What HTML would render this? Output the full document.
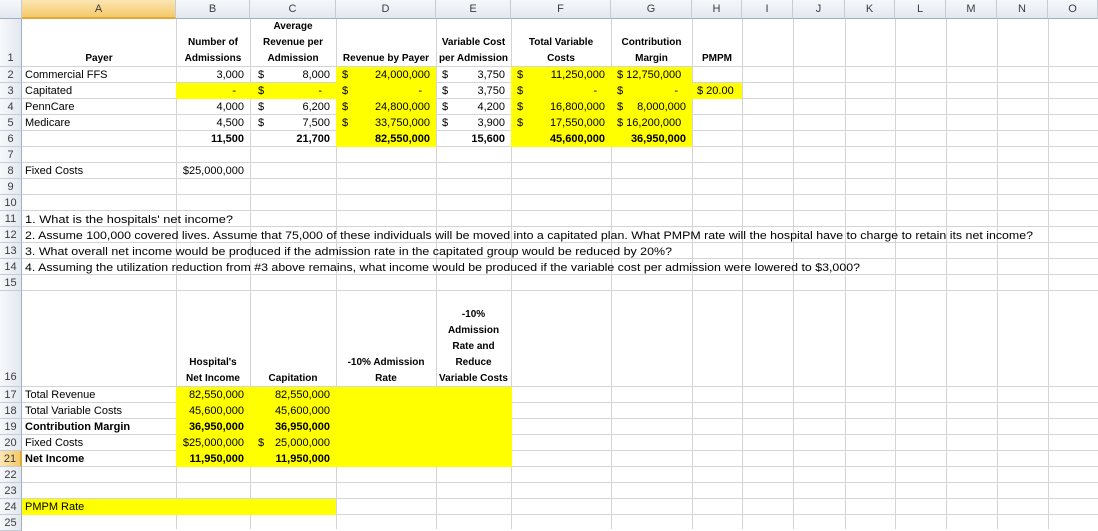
<!DOCTYPE html>
<html><head><meta charset="utf-8"><style>
*{margin:0;padding:0;box-sizing:border-box}
body{width:1098px;height:529px;overflow:hidden;background:#fff;position:relative;font-family:"Liberation Sans",sans-serif;font-size:11px}
div{position:absolute}
.v{top:19px;width:1px;height:510px;background:#d4d4d4}
.h{left:22px;width:1076px;height:1px;background:#d4d4d4}
.y{background:#ffff00}
.hd{background:linear-gradient(#f6f8fb,#e3e8ef);color:#3c3c3c;text-align:center;line-height:19px;top:0;height:19px;border-right:1px solid #c4ccd6;border-bottom:1px solid #9eb0c6;font-size:11px}
.rh{left:0;width:22px;height:16px;line-height:16px;background:linear-gradient(90deg,#f6f8fb,#e3e8ef);color:#3c3c3c;text-align:center;border-bottom:1px solid #c4ccd6;border-right:1px solid #9eb0c6;font-size:11px}
.t{height:16px;line-height:16px;white-space:nowrap;color:#000}
.r{text-align:right;padding-right:6px}
.b{font-weight:bold}
.hc{font-weight:bold;text-align:center;line-height:16px;white-space:nowrap;font-size:10px}
</style></head><body>

<div class="v" style="left:176px"></div><div class="v" style="left:250px"></div><div class="v" style="left:336px"></div><div class="v" style="left:436px"></div><div class="v" style="left:511px"></div><div class="v" style="left:611px"></div><div class="v" style="left:692px"></div><div class="v" style="left:742px"></div><div class="v" style="left:793px"></div><div class="v" style="left:845px"></div><div class="v" style="left:895px"></div><div class="v" style="left:946px"></div><div class="v" style="left:997px"></div><div class="v" style="left:1048px"></div>
<div class="h" style="top:66px"></div><div class="h" style="top:82px"></div><div class="h" style="top:98px"></div><div class="h" style="top:114px"></div><div class="h" style="top:130px"></div><div class="h" style="top:146px"></div><div class="h" style="top:162px"></div><div class="h" style="top:178px"></div><div class="h" style="top:194px"></div><div class="h" style="top:210px"></div><div class="h" style="top:226px"></div><div class="h" style="top:242px"></div><div class="h" style="top:258px"></div><div class="h" style="top:274px"></div><div class="h" style="top:290px"></div><div class="h" style="top:386px"></div><div class="h" style="top:402px"></div><div class="h" style="top:418px"></div><div class="h" style="top:434px"></div><div class="h" style="top:450px"></div><div class="h" style="top:466px"></div><div class="h" style="top:482px"></div><div class="h" style="top:498px"></div><div class="h" style="top:514px"></div>

<div class="y" style="left:176px;top:83px;width:160px;height:16px"></div>
<div class="y" style="left:336px;top:67px;width:100px;height:80px"></div>
<div class="y" style="left:511px;top:67px;width:181px;height:80px"></div>
<div class="y" style="left:692px;top:83px;width:50px;height:16px"></div>
<div class="y" style="left:176px;top:387px;width:336px;height:80px"></div>
<div class="y" style="left:22px;top:499px;width:314px;height:16px"></div>

<div class="hd" style="left:0;width:22px"></div>
<div class="hd" style="left:22px;width:154px;background:linear-gradient(#fbe6b4,#f5c96a);border-bottom:2px solid #e2a93a">A</div>
<div class="hd" style="left:176px;width:74px">B</div>
<div class="hd" style="left:250px;width:86px">C</div>
<div class="hd" style="left:336px;width:100px">D</div>
<div class="hd" style="left:436px;width:75px">E</div>
<div class="hd" style="left:511px;width:100px">F</div>
<div class="hd" style="left:611px;width:81px">G</div>
<div class="hd" style="left:692px;width:50px">H</div>
<div class="hd" style="left:742px;width:51px">I</div>
<div class="hd" style="left:793px;width:52px">J</div>
<div class="hd" style="left:845px;width:50px">K</div>
<div class="hd" style="left:895px;width:51px">L</div>
<div class="hd" style="left:946px;width:51px">M</div>
<div class="hd" style="left:997px;width:51px">N</div>
<div class="hd" style="left:1048px;width:50px">O</div>

<div class="rh" style="top:19px;height:48px;line-height:78px">1</div>
<div class="rh" style="top:67px">2</div><div class="rh" style="top:83px">3</div><div class="rh" style="top:99px">4</div><div class="rh" style="top:115px">5</div><div class="rh" style="top:131px">6</div><div class="rh" style="top:147px">7</div><div class="rh" style="top:163px">8</div><div class="rh" style="top:179px">9</div><div class="rh" style="top:195px">10</div><div class="rh" style="top:211px">11</div><div class="rh" style="top:227px">12</div><div class="rh" style="top:243px">13</div><div class="rh" style="top:259px">14</div><div class="rh" style="top:275px">15</div>
<div class="rh" style="top:291px;height:96px;line-height:172px">16</div>
<div class="rh" style="top:387px">17</div><div class="rh" style="top:403px">18</div><div class="rh" style="top:419px">19</div><div class="rh" style="top:435px">20</div><div class="rh" style="top:451px;background:linear-gradient(90deg,#fbe6b4,#f5c96a);border-right:2px solid #e2a93a">21</div><div class="rh" style="top:467px">22</div><div class="rh" style="top:483px">23</div><div class="rh" style="top:499px">24</div><div class="rh" style="top:515px">25</div>

<div class="hc" style="left:22px;width:154px;top:51px">Payer</div>
<div class="hc" style="left:176px;width:74px;top:35px">Number of<br>Admissions</div>
<div class="hc" style="left:250px;width:86px;top:19px">Average<br>Revenue per<br>Admission</div>
<div class="hc" style="left:336px;width:100px;top:51px">Revenue by Payer</div>
<div class="hc" style="left:436px;width:75px;top:35px">Variable Cost<br>per Admission</div>
<div class="hc" style="left:511px;width:100px;top:35px">Total Variable<br>Costs</div>
<div class="hc" style="left:611px;width:81px;top:35px">Contribution<br>Margin</div>
<div class="hc" style="left:692px;width:50px;top:51px">PMPM</div>

<div class="t" style="left:25px;top:67px">Commercial FFS</div>
<div class="t r" style="left:176px;width:74px;top:67px">3,000</div>
<div class="t" style="left:258px;top:67px">$</div><div class="t r" style="left:250px;width:86px;top:67px">8,000</div>
<div class="t" style="left:342px;top:67px">$</div><div class="t r" style="left:336px;width:100px;top:67px">24,000,000</div>
<div class="t" style="left:442px;top:67px">$</div><div class="t r" style="left:436px;width:75px;top:67px">3,750</div>
<div class="t" style="left:517px;top:67px">$</div><div class="t r" style="left:511px;width:100px;top:67px">11,250,000</div>
<div class="t" style="left:617px;top:67px">$ 12,750,000</div>
<div class="t" style="left:25px;top:83px">Capitated</div>
<div class="t r" style="left:176px;width:74px;top:83px;padding-right:14px">-</div>
<div class="t" style="left:258px;top:83px">$</div><div class="t r" style="left:250px;width:86px;top:83px;padding-right:14px">-</div>
<div class="t" style="left:342px;top:83px">$</div><div class="t r" style="left:336px;width:100px;top:83px;padding-right:14px">-</div>
<div class="t" style="left:442px;top:83px">$</div><div class="t r" style="left:436px;width:75px;top:83px">3,750</div>
<div class="t" style="left:517px;top:83px">$</div><div class="t r" style="left:511px;width:100px;top:83px;padding-right:14px">-</div>
<div class="t" style="left:617px;top:83px">$</div><div class="t r" style="left:611px;width:81px;top:83px;padding-right:14px">-</div>
<div class="t" style="left:697px;top:83px">$ 20.00</div>
<div class="t" style="left:25px;top:99px">PennCare</div>
<div class="t r" style="left:176px;width:74px;top:99px">4,000</div>
<div class="t" style="left:258px;top:99px">$</div><div class="t r" style="left:250px;width:86px;top:99px">6,200</div>
<div class="t" style="left:342px;top:99px">$</div><div class="t r" style="left:336px;width:100px;top:99px">24,800,000</div>
<div class="t" style="left:442px;top:99px">$</div><div class="t r" style="left:436px;width:75px;top:99px">4,200</div>
<div class="t" style="left:517px;top:99px">$</div><div class="t r" style="left:511px;width:100px;top:99px">16,800,000</div>
<div class="t" style="left:617px;top:99px">$</div><div class="t r" style="left:611px;width:81px;top:99px">8,000,000</div>
<div class="t" style="left:25px;top:115px">Medicare</div>
<div class="t r" style="left:176px;width:74px;top:115px">4,500</div>
<div class="t" style="left:258px;top:115px">$</div><div class="t r" style="left:250px;width:86px;top:115px">7,500</div>
<div class="t" style="left:342px;top:115px">$</div><div class="t r" style="left:336px;width:100px;top:115px">33,750,000</div>
<div class="t" style="left:442px;top:115px">$</div><div class="t r" style="left:436px;width:75px;top:115px">3,900</div>
<div class="t" style="left:517px;top:115px">$</div><div class="t r" style="left:511px;width:100px;top:115px">17,550,000</div>
<div class="t" style="left:617px;top:115px">$ 16,200,000</div>
<div class="t r b" style="left:176px;width:74px;top:131px">11,500</div>
<div class="t r b" style="left:250px;width:86px;top:131px">21,700</div>
<div class="t r b" style="left:336px;width:100px;top:131px">82,550,000</div>
<div class="t r b" style="left:436px;width:75px;top:131px">15,600</div>
<div class="t r b" style="left:511px;width:100px;top:131px">45,600,000</div>
<div class="t r b" style="left:611px;width:81px;top:131px">36,950,000</div>
<div class="t" style="left:25px;top:163px">Fixed Costs</div>
<div class="t r" style="left:176px;width:74px;top:163px">$25,000,000</div>

<svg style="position:absolute;left:0;top:0" width="1098" height="529" font-family="Liberation Sans, sans-serif" font-size="11">
<text x="25" y="223" textLength="208" lengthAdjust="spacingAndGlyphs">1.  What is the hospitals' net income?</text>
<text x="25" y="239" textLength="1008" lengthAdjust="spacingAndGlyphs">2.  Assume 100,000 covered lives.  Assume that 75,000 of these individuals will be moved into a capitated plan.  What PMPM rate will the hospital have to charge to retain its net income?</text>
<text x="25" y="255" textLength="647" lengthAdjust="spacingAndGlyphs">3.  What overall net income would be produced if the admission rate in the capitated group would be reduced by 20%?</text>
<text x="25" y="271" textLength="835" lengthAdjust="spacingAndGlyphs">4.  Assuming the utilization reduction from #3 above remains, what income would be produced if the variable cost per admission were lowered to $3,000?</text>
</svg>

<div class="hc" style="left:176px;width:74px;top:355px">Hospital's<br>Net Income</div>
<div class="hc" style="left:250px;width:86px;top:371px">Capitation</div>
<div class="hc" style="left:336px;width:100px;top:355px">-10% Admission<br>Rate</div>
<div class="hc" style="left:436px;width:75px;top:307px">-10%<br>Admission<br>Rate and<br>Reduce<br>Variable Costs</div>

<div class="t" style="left:25px;top:387px">Total Revenue</div>
<div class="t r" style="left:176px;width:74px;top:387px">82,550,000</div>
<div class="t r" style="left:250px;width:86px;top:387px">82,550,000</div>
<div class="t" style="left:25px;top:403px">Total Variable Costs</div>
<div class="t r" style="left:176px;width:74px;top:403px">45,600,000</div>
<div class="t r" style="left:250px;width:86px;top:403px">45,600,000</div>
<div class="t b" style="left:25px;top:419px">Contribution Margin</div>
<div class="t r b" style="left:176px;width:74px;top:419px">36,950,000</div>
<div class="t r b" style="left:250px;width:86px;top:419px">36,950,000</div>
<div class="t" style="left:25px;top:435px">Fixed Costs</div>
<div class="t r" style="left:176px;width:74px;top:435px">$25,000,000</div>
<div class="t" style="left:258px;top:435px">$</div><div class="t r" style="left:250px;width:86px;top:435px">25,000,000</div>
<div class="t b" style="left:25px;top:451px">Net Income</div>
<div class="t r b" style="left:176px;width:74px;top:451px">11,950,000</div>
<div class="t r b" style="left:250px;width:86px;top:451px">11,950,000</div>

<div class="t" style="left:25px;top:499px">PMPM Rate</div>
</body></html>
